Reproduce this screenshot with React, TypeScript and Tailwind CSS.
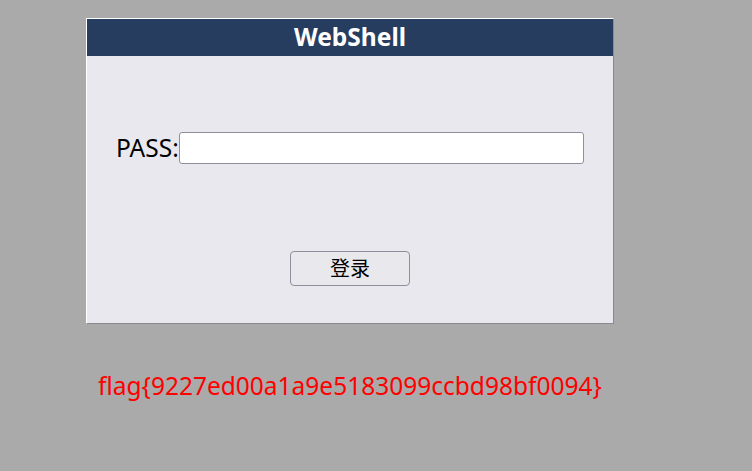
export default function App() {
  return (
    <div
      className="min-h-[471px] w-full bg-[#aaaaaa] pt-[18px] pl-[86px]"
      style={{ fontFamily: '"Noto Sans", "Noto Sans CJK SC", sans-serif' }}
    >
      <div className="flex h-[306px] w-[528px] flex-col border border-t-white border-l-white border-r-[#8a8a8a] border-b-[#8a8a8a] bg-[#e9e8ee]">
        <div className="flex h-[37px] items-center justify-center bg-[#273d5f] text-[24.5px] font-bold leading-none text-white">
          WebShell
        </div>

        <div className="mt-[76px] flex items-center pl-[29px]">
          <label className="text-[24.5px] leading-none text-black">PASS:</label>
          <input
            type="password"
            className="h-[32px] w-[405px] rounded-[3px] border border-[#8f8f9d] bg-white outline-none"
          />
        </div>

        <div className="mt-[87px] flex justify-center">
          <button className="h-[35px] w-[120px] rounded-[4px] border border-[#8f8f9d] bg-[#e9e9ed] text-[20px] leading-none text-black">
            登录
          </button>
        </div>
      </div>

      <div className="mt-[50px] pl-[12px] text-[24.5px] leading-none text-[#ff0000]">
        flag{'{'}9227ed00a1a9e5183099ccbd98bf0094{'}'}
      </div>
    </div>
  )
}
